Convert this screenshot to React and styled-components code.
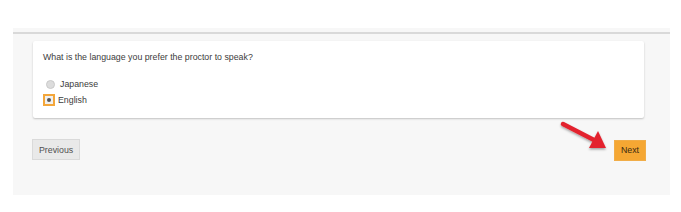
import styled, { createGlobalStyle } from "styled-components";

const Global = createGlobalStyle`
  html, body {
    margin: 0;
    padding: 0;
    background: #ffffff;
    font-family: "Liberation Sans", Tahoma, sans-serif;
  }
`;

export default function App() {
  return (
    <>
      <Global />
      <Panel>
        <Divider />
        <Card>
          <Question>What is the language you prefer the proctor to speak?</Question>
          <Options>
            <Option>
              <Radio />
              <span>Japanese</span>
            </Option>
            <Option>
              <Radio checked focused />
              <span>English</span>
            </Option>
          </Options>
        </Card>
        <Actions>
          <Button>Previous</Button>
          <NextWrap>
            <Arrow width="52" height="34" viewBox="0 0 52 34">
              <defs>
                <filter id="sh" x="-20%" y="-20%" width="140%" height="160%">
                  <feDropShadow dx="0" dy="1.5" stdDeviation="1.2" floodColor="#000" floodOpacity="0.35" />
                </filter>
              </defs>
              <g filter="url(#sh)">
                <line x1="3" y1="3" x2="34" y2="19" stroke="#e3232e" strokeWidth="4.5" strokeLinecap="round" />
                <polygon points="46,27 29,27 38,10" fill="#e3232e" />
              </g>
            </Arrow>
            <Button primary>Next</Button>
          </NextWrap>
        </Actions>
      </Panel>
    </>
  );
}

const Panel = styled.div`
  margin: 28px 11px 0 13px;
  height: 167px;
  background: #f7f7f7;
  padding-top: 4px;
  box-sizing: border-box;
`;

const Divider = styled.div`
  height: 2px;
  background: #d9d9d9;
`;

const Card = styled.div`
  margin: 7px 26px 0 20px;
  height: 77px;
  box-sizing: border-box;
  background: #ffffff;
  border-radius: 2px;
  box-shadow: 0 1px 2px rgba(0, 0, 0, 0.22);
  padding: 10px 10px 0 10px;
`;

const Question = styled.div`
  font-size: 8.8px;
  color: #3c3c3c;
  line-height: 12px;
`;

const Options = styled.div`
  margin-top: 15px;
  display: flex;
  flex-direction: column;
  gap: 4px;
`;

const Option = styled.label`
  display: flex;
  align-items: center;
  gap: 3px;
  font-size: 8.8px;
  color: #3c3c3c;
  line-height: 12px;
`;

const Radio = styled.span`
  width: 7px;
  height: 7px;
  margin: 0 2px 0 3px;
  border-radius: 50%;
  background: #dcdcdc;
  border: 1px solid #cacaca;
  position: relative;
  ${(p) =>
    p.focused &&
    `
    margin: 0 0 0 0;
    border-radius: 0;
    width: 8px;
    height: 8px;
    background: #f0f0f0;
    border: 2px solid #f3a63a;
  `}
  &::after {
    content: "";
    display: ${(p) => (p.checked ? "block" : "none")};
    position: absolute;
    left: 2px;
    top: 2px;
    width: 4px;
    height: 4px;
    border-radius: 50%;
    background: #555555;
  }
`;

const Actions = styled.div`
  display: flex;
  justify-content: space-between;
  align-items: center;
  margin: 21px 24px 0 19px;
`;

const NextWrap = styled.div`
  position: relative;
`;

const Arrow = styled.svg`
  position: absolute;
  left: -54px;
  top: -18px;
  overflow: visible;
`;

const Button = styled.button`
  font-family: "Liberation Sans", Tahoma, sans-serif;
  font-size: 8.8px;
  height: 21px;
  padding: 0 ${(p) => (p.primary ? "6px" : "6px")};
  border: 1px solid ${(p) => (p.primary ? "#f1ad48" : "#dadada")};
  background: ${(p) => (p.primary ? "#f5a733" : "#e9e9e9")};
  color: ${(p) => (p.primary ? "#3a2a10" : "#505050")};
  border-radius: 0;
  cursor: pointer;
`;
